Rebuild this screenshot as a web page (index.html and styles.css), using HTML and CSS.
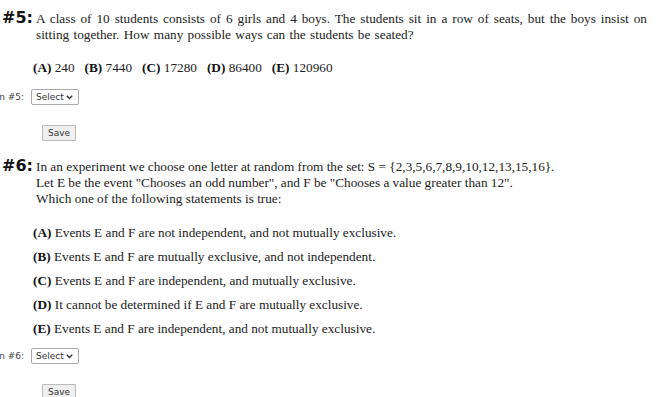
FILE: index.html
```html
<!DOCTYPE html>
<html lang="en">
<head>
    <meta charset="UTF-8">
    <title>Quiz</title>
    <link rel="stylesheet" href="styles.css">
</head>
<body>
    <div class="quiz">
        <!-- === QUESTION 5 === -->
        <section class="question">
            <div class="q-head">
                <span class="q-num">#5:</span>
                <p class="q-text q-justify">A class of 10 students consists of 6 girls and 4 boys. The students sit in a row of seats, but the boys insist on sitting together. How many possible ways can the students be seated?</p>
            </div>
            <p class="choices-inline"><span class="choice"><b>(A)</b> 240</span><span class="choice"><b>(B)</b> 7440</span><span class="choice"><b>(C)</b> 17280</span><span class="choice"><b>(D)</b> 86400</span><span class="choice"><b>(E)</b> 120960</span></p>
            <div class="answer-row">
                <span class="answer-label"><span>Question #5:</span></span>
                <span class="select-wrap">
                    <select class="select" aria-label="Answer 5">
                        <option>Select</option>
                        <option>A</option>
                        <option>B</option>
                        <option>C</option>
                        <option>D</option>
                        <option>E</option>
                    </select>
                    <svg class="chevron" width="7" height="5" viewBox="0 0 7 5"><path d="M0.8 0.8 L3.5 3.6 L6.2 0.8" fill="none" stroke="#333" stroke-width="1.4"/></svg>
                </span>
            </div>
            <div class="save-row"><button class="btn-save">Save</button></div>
        </section>

        <!-- === QUESTION 6 === -->
        <section class="question">
            <div class="q-head">
                <span class="q-num">#6:</span>
                <p class="q-text">In an experiment we choose one letter at random from the set: S = {2,3,5,6,7,8,9,10,12,13,15,16}.<br>Let E be the event "Chooses an odd number", and F be "Chooses a value greater than 12".<br>Which one of the following statements is true:</p>
            </div>
            <div class="choices-list">
                <p class="choice-line"><b>(A)</b> Events E and F are not independent, and not mutually exclusive.</p>
                <p class="choice-line"><b>(B)</b> Events E and F are mutually exclusive, and not independent.</p>
                <p class="choice-line"><b>(C)</b> Events E and F are independent, and mutually exclusive.</p>
                <p class="choice-line"><b>(D)</b> It cannot be determined if E and F are mutually exclusive.</p>
                <p class="choice-line"><b>(E)</b> Events E and F are independent, and not mutually exclusive.</p>
            </div>
            <div class="answer-row answer-row-tight">
                <span class="answer-label"><span>Question #6:</span></span>
                <span class="select-wrap">
                    <select class="select" aria-label="Answer 6">
                        <option>Select</option>
                        <option>A</option>
                        <option>B</option>
                        <option>C</option>
                        <option>D</option>
                        <option>E</option>
                    </select>
                    <svg class="chevron" width="7" height="5" viewBox="0 0 7 5"><path d="M0.8 0.8 L3.5 3.6 L6.2 0.8" fill="none" stroke="#333" stroke-width="1.4"/></svg>
                </span>
            </div>
            <div class="save-row"><button class="btn-save">Save</button></div>
        </section>
    </div>
</body>
</html>
```

FILE: styles.css
```css
/* === BASE === */
* {
    margin: 0;
    padding: 0;
    box-sizing: border-box;
}

body {
    background: #fff;
    color: #222;
    font-family: 'Liberation Serif', 'Times New Roman', serif;
    font-size: 13.25px;
    line-height: 16px;
}

.quiz {
    padding: 10px 10px 0 2px;
}

/* === QUESTION HEADER === */
.question {
    margin-bottom: 17px;
}

.q-head {
    display: flex;
    align-items: baseline;
}

.q-num {
    flex: 0 0 34px;
    font-family: 'DejaVu Sans', Verdana, sans-serif;
    font-weight: bold;
    font-size: 16px;
    color: #111;
}

.q-text {
    flex: 1;
}

.q-justify {
    text-align: justify;
    word-spacing: 1px;
}

/* === CHOICES === */
.choices-inline {
    display: flex;
    gap: 10px;
    margin: 17px 0 0 31px;
}

.choices-list {
    margin: 18px 0 0 31px;
}

.choice-line {
    margin-bottom: 8px;
}

.choice-line b,
.choice b {
    color: #111;
}

/* === ANSWER === */
.answer-row {
    display: flex;
    align-items: center;
    margin-top: 13px;
    font-family: 'DejaVu Sans', Verdana, sans-serif;
    font-size: 9px;
    color: #444;
}

.answer-row-tight {
    margin-top: 11px;
}

.answer-label {
    width: 24px;
    margin-left: -2px;
    margin-right: 7px;
    display: flex;
    justify-content: flex-end;
    overflow: hidden;
    white-space: nowrap;
}

.select-wrap {
    position: relative;
    display: inline-block;
}

.select {
    appearance: none;
    -webkit-appearance: none;
    width: 48px;
    height: 16px;
    padding: 0 0 0 4px;
    border: 1px solid #a9a9a9;
    border-radius: 2px;
    background: #fff;
    color: #333;
    font-family: 'DejaVu Sans', Verdana, sans-serif;
    font-size: 9px;
    line-height: 14px;
}

.chevron {
    position: absolute;
    right: 6px;
    top: 6px;
    pointer-events: none;
}

/* === SAVE === */
.save-row {
    margin-top: 19px;
    padding-left: 40px;
}

.btn-save {
    width: 34px;
    height: 16px;
    border: 1px solid #bbb;
    border-radius: 1px;
    background: #efefef;
    color: #333;
    font-family: 'DejaVu Sans', Verdana, sans-serif;
    font-size: 9px;
    line-height: 14px;
}
```
